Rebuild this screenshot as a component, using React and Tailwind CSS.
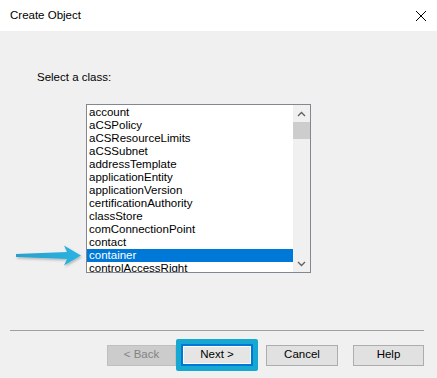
import React from "react";

const items = [
  "account",
  "aCSPolicy",
  "aCSResourceLimits",
  "aCSSubnet",
  "addressTemplate",
  "applicationEntity",
  "applicationVersion",
  "certificationAuthority",
  "classStore",
  "comConnectionPoint",
  "contact",
  "container",
  "controlAccessRight",
];

export default function App() {
  return (
    <div
      className="relative w-[437px] h-[378px] bg-[#f0f0f0] flex flex-col overflow-hidden text-black"
      style={{ fontFamily: '"Liberation Sans", Arial, sans-serif' }}
    >
      {/* Title bar */}
      <div className="h-[31px] bg-white flex items-center justify-between pl-[10px] pr-[10px] shrink-0">
        <span className="text-[11.5px] leading-[13px]">Create Object</span>
        <svg width="12" height="12" viewBox="0 0 12 12">
          <path d="M1 1 L11 11 M11 1 L1 11" stroke="#000" strokeWidth="1" fill="none" />
        </svg>
      </div>

      {/* Body */}
      <div className="flex flex-col">
        <div className="pt-[40px] pl-[37px] text-[11.5px] leading-[13px]">Select a class:</div>

        <div className="ml-[86px] mt-[20px] w-[225px] h-[169px] border border-[#828790] bg-white flex overflow-hidden">
          <div className="flex-1 flex flex-col pt-[1px] overflow-hidden">
            {items.map((it) => (
              <div
                key={it}
                className={
                  "h-[13px] shrink-0 pl-[2px] text-[11.5px] leading-[13px] whitespace-nowrap " +
                  (it === "container" ? "bg-[#0078d7] text-white" : "")
                }
              >
                {it}
              </div>
            ))}
          </div>
          <div className="w-[17px] bg-[#f0f0f0] flex flex-col shrink-0">
            <div className="h-[17px] flex items-center justify-center">
              <svg width="9" height="6" viewBox="0 0 9 6">
                <path d="M1 5 L4.5 1.5 L8 5" stroke="#606060" strokeWidth="1.3" fill="none" />
              </svg>
            </div>
            <div className="h-[17px] bg-[#cdcdcd]" />
            <div className="flex-1" />
            <div className="h-[17px] flex items-center justify-center">
              <svg width="9" height="6" viewBox="0 0 9 6">
                <path d="M1 1 L4.5 4.5 L8 1" stroke="#606060" strokeWidth="1.3" fill="none" />
              </svg>
            </div>
          </div>
        </div>

        {/* Separator */}
        <div className="mt-[57px] ml-[10px] w-[414px] h-[1px] bg-[#a0a0a0]" />

        {/* Buttons */}
        <div className="mt-[8px] h-[32px] flex items-center pl-[107px] text-[11.5px]">
          <div className="w-[69px] h-[21px] bg-[#cccccc] border border-[#bfbfbf] text-[#838383] flex items-center justify-center">
            &lt; Back
          </div>
          <div className="w-[82px] h-[32px] bg-[#17a8d1] rounded-[2px] p-[5px] flex">
            <div className="flex-1 border-2 border-[#0078d7] bg-[#e5e5e5] shadow-[inset_0_0_0_1px_#ffffff] flex items-center justify-center">
              Next &gt;
            </div>
          </div>
          <div className="ml-[8px] w-[72px] h-[21px] bg-[#e1e1e1] border border-[#adadad] flex items-center justify-center">
            Cancel
          </div>
          <div className="ml-[15px] w-[71px] h-[21px] bg-[#e1e1e1] border border-[#adadad] flex items-center justify-center">
            Help
          </div>
        </div>
      </div>

      {/* Annotation arrow */}
      <svg
        className="absolute left-0 top-0 pointer-events-none"
        width="437"
        height="378"
        viewBox="0 0 437 378"
      >
        <defs>
          <linearGradient id="ag" x1="0" y1="0" x2="1" y2="0">
            <stop offset="0" stopColor="#2aa0cc" />
            <stop offset="1" stopColor="#2bb3e2" />
          </linearGradient>
          <filter id="sh" x="-10%" y="-50%" width="130%" height="200%">
            <feDropShadow dx="1" dy="1.5" stdDeviation="1" floodColor="#000" floodOpacity="0.25" />
          </filter>
        </defs>
        <polygon
          points="16,254 67,252 64,245.5 81,255.5 64,265.5 67,259 16,257"
          fill="url(#ag)"
          filter="url(#sh)"
        />
      </svg>
    </div>
  );
}
